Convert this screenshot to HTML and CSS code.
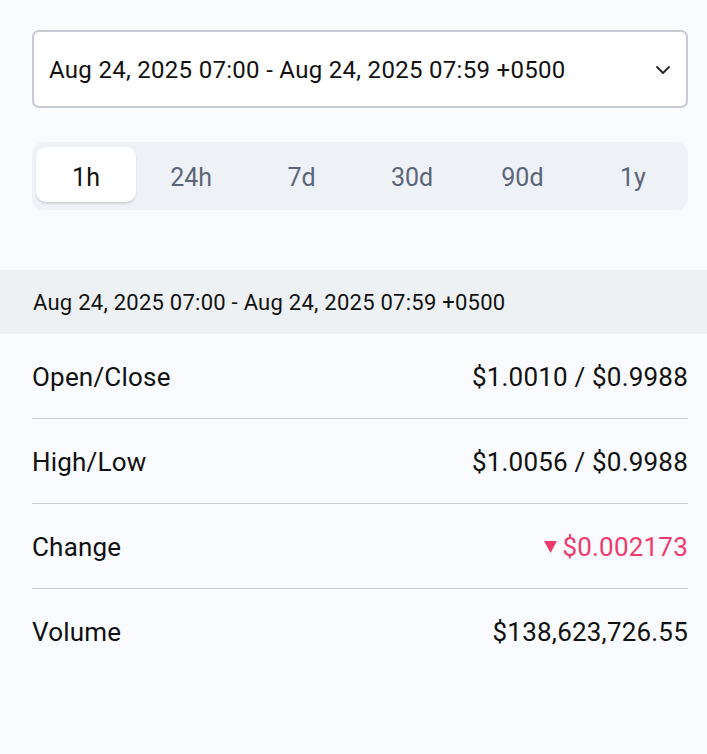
FILE: index.html
```html
<!DOCTYPE html>
<html lang="en">
<head>
    <meta charset="UTF-8">
    <meta name="viewport" content="width=device-width, initial-scale=1.0">
    <title>Price History</title>
    <link rel="stylesheet" href="styles.css">
</head>
<body>
    <div class="controls">
        <div class="range-select">
            <span>Aug 24, 2025 07:00 - Aug 24, 2025 07:59 +0500</span>
            <svg class="chevron" width="16" height="10" viewBox="0 0 16 10">
                <path d="M2 2 L8 8 L14 2" fill="none" stroke="#222" stroke-width="1.8" stroke-linecap="round" stroke-linejoin="round"/>
            </svg>
        </div>

        <div class="tabs">
            <div class="tab active">1h</div>
            <div class="tab">24h</div>
            <div class="tab">7d</div>
            <div class="tab">30d</div>
            <div class="tab">90d</div>
            <div class="tab">1y</div>
        </div>
    </div>

    <div class="period">Aug 24, 2025 07:00 - Aug 24, 2025 07:59 +0500</div>

    <div class="stats">
        <div class="row">
            <span>Open/Close</span>
            <span>$1.0010 / $0.9988</span>
        </div>
        <div class="row">
            <span>High/Low</span>
            <span>$1.0056 / $0.9988</span>
        </div>
        <div class="row">
            <span>Change</span>
            <span class="down">
                <svg class="arrow" width="13" height="12" viewBox="0 0 13 12"><path d="M0 0 H13 L6.5 12 Z" fill="#ef3b6b"/></svg>$0.002173
            </span>
        </div>
        <div class="row">
            <span>Volume</span>
            <span>$138,623,726.55</span>
        </div>
    </div>
</body>
</html>
```

FILE: styles.css
```css
body {
    margin: 0;
    background: #f9fbfe;
    color: #111;
    font-family: Roboto, "Liberation Sans", sans-serif;
}

.controls {
    padding: 30px 19px 60px 32px;
}

.range-select {
    display: flex;
    align-items: center;
    justify-content: space-between;
    height: 78px;
    box-sizing: border-box;
    padding: 2px 15px 0 15px;
    border: 2px solid #c6cbd4;
    border-radius: 7px;
    background: #fff;
    font-size: 24px;
    letter-spacing: 0.3px;
}

.tabs {
    display: flex;
    margin-top: 34px;
    padding: 5px 0 8px 4px;
    background: #eef1f5;
    border-radius: 12px;
}

.tab {
    flex: 1;
    height: 55px;
    box-sizing: border-box;
    padding-top: 5px;
    display: flex;
    align-items: center;
    justify-content: center;
    font-size: 25px;
    color: #5b6579;
    border-radius: 10px;
}

.tab.active {
    flex: 0 0 100px;
    background: #fff;
    color: #111;
    box-shadow: 0 2px 2px rgba(0, 0, 0, 0.12);
}

.period {
    height: 64px;
    display: flex;
    align-items: center;
    padding: 0 33px;
    background: #eef1f4;
    font-size: 22px;
    letter-spacing: 0.25px;
}

.stats {
    padding: 0 19px 0 32px;
}

.row {
    display: flex;
    justify-content: space-between;
    align-items: center;
    height: 82px;
    padding-top: 2px;
    border-bottom: 1px solid #c8ccd5;
    font-size: 26px;
    letter-spacing: 0.2px;
}

.row:last-child {
    border-bottom: none;
}

.down {
    display: flex;
    align-items: center;
    color: #ef3b6b;
}

.arrow {
    margin-right: 5px;
}
```
